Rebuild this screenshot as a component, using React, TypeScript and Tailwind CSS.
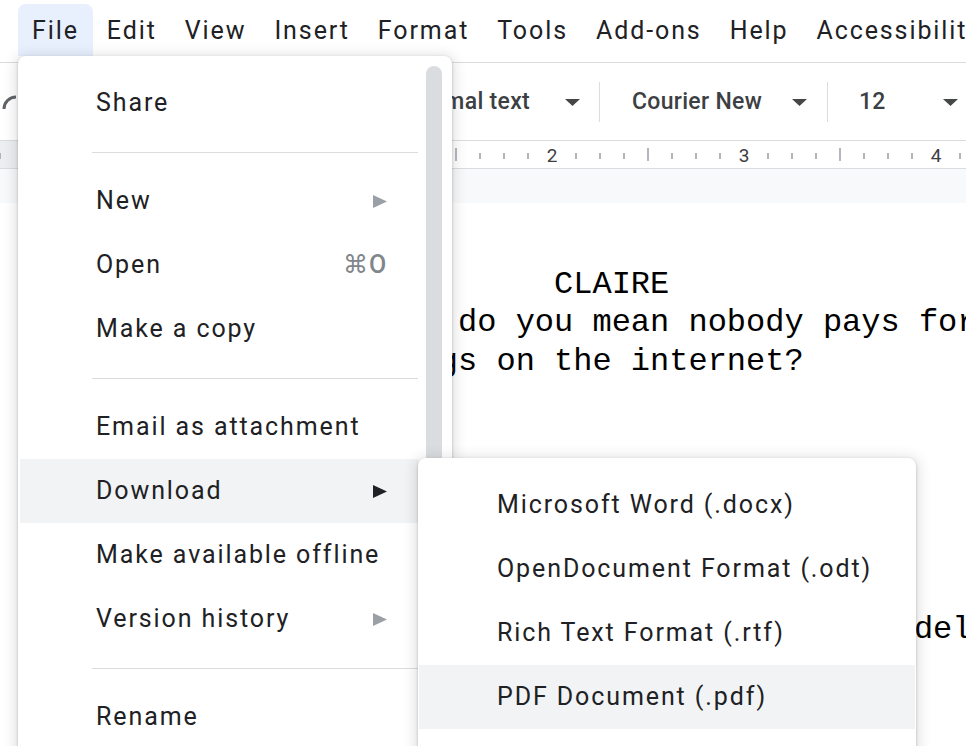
import React from "react";

const Caret = () => (
  <svg width="15" height="7" viewBox="0 0 15 7" className="block">
    <polygon points="0,0 15,0 7.5,7" fill="#444746" />
  </svg>
);

const Tri = ({ color }: { color: string }) => (
  <svg width="14" height="13" viewBox="0 0 14 13" className="block">
    <polygon points="0,0 14,6.5 0,13" fill={color} />
  </svg>
);

function Ruler() {
  const els: React.ReactNode[] = [];
  for (let n = -7; n <= 34; n++) {
    const x = 168 + 24 * n;
    if (x < 0 || x > 966) continue;
    const m = ((n % 8) + 8) % 8;
    if (m === 0) {
      const num = n / 8;
      if (num > 0)
        els.push(
          <text key={n} x={x} y={21} textAnchor="middle" fontSize="19" fill="#3c4043" fontFamily="Roboto, sans-serif">
            {num}
          </text>
        );
    } else if (m === 4) {
      els.push(<rect key={n} x={x - 0.75} y={7} width={1.5} height={13} fill="#9aa0a6" />);
    } else {
      els.push(<rect key={n} x={x - 0.75} y={12} width={1.5} height={6} fill="#9aa0a6" />);
    }
  }
  return (
    <svg width="966" height="27" viewBox="0 0 966 27" className="block">
      <rect x="0" y="0" width="168" height="27" fill="#eceef1" />
      {els}
    </svg>
  );
}

const menuBar = ["File", "Edit", "View", "Insert", "Format", "Tools", "Add-ons", "Help", "Accessibility"];

type Item =
  | { type: "sep" }
  | { type: "item"; label: string; right?: "arrow" | "arrowDark" | "cmd"; active?: boolean };

const fileItems: Item[] = [
  { type: "item", label: "Share" },
  { type: "sep" },
  { type: "item", label: "New", right: "arrow" },
  { type: "item", label: "Open", right: "cmd" },
  { type: "item", label: "Make a copy" },
  { type: "sep" },
  { type: "item", label: "Email as attachment" },
  { type: "item", label: "Download", right: "arrowDark", active: true },
  { type: "item", label: "Make available offline" },
  { type: "item", label: "Version history", right: "arrow" },
  { type: "sep" },
  { type: "item", label: "Rename" },
];

const subItems = [
  { label: "Microsoft Word (.docx)" },
  { label: "OpenDocument Format (.odt)" },
  { label: "Rich Text Format (.rtf)" },
  { label: "PDF Document (.pdf)", active: true },
];

export default function App() {
  return (
    <div className="relative h-[746px] w-[966px] overflow-hidden bg-white font-['Roboto',sans-serif]">
      {/* Menu bar */}
      <div className="flex h-[63px] items-start border-b border-[#dadce0] pl-[18px] pt-[4px] text-[25px] tracking-[1.9px] text-[#202124]">
        {menuBar.map((m) => (
          <div
            key={m}
            className={
              "flex h-[52px] shrink-0 items-center rounded-t-[8px] px-[14px] pt-[2px] " +
              (m === "File" ? "bg-[#e8f0fe]" : "")
            }
          >
            {m}
          </div>
        ))}
      </div>

      {/* Toolbar */}
      <div className="flex h-[78px] items-center border-b border-[#dadce0] pt-[1px] text-[23px] font-medium tracking-[0.3px] text-[#3c4043]">
        <div className="relative h-full w-[20px] shrink-0">
          <svg width="20" height="77" viewBox="0 0 20 77" className="block">
            <path d="M4 45 A12 12 0 0 1 16 33" fill="none" stroke="#5f6368" strokeWidth="3" />
          </svg>
        </div>
        <div className="flex w-[579px] shrink-0 items-center justify-end pr-[19px]">
          <span className="whitespace-nowrap">Normal text</span>
          <span className="ml-[35px]">
            <Caret />
          </span>
        </div>
        <div className="h-[40px] w-px shrink-0 bg-[#dadce0]" />
        <div className="flex w-[227px] shrink-0 items-center justify-between pl-[32px] pr-[20px]">
          <span className="whitespace-nowrap">Courier New</span>
          <Caret />
        </div>
        <div className="h-[40px] w-px shrink-0 bg-[#dadce0]" />
        <div className="flex flex-1 items-center justify-between pl-[31px] pr-[8px]">
          <span>12</span>
          <Caret />
        </div>
      </div>

      {/* Ruler */}
      <div className="h-[28px] border-b border-[#dadce0]">
        <Ruler />
      </div>

      {/* Canvas gap */}
      <div className="h-[34px] bg-[#f8f9fa]" />

      {/* Document */}
      <div className="whitespace-pre pl-[362px] pt-[63px] font-['Liberation_Mono',monospace] text-[32px] leading-[38.3px] text-black">
        <div>{"          CLAIRE"}</div>
        <div>What do you mean nobody pays for</div>
        <div>things on the internet?</div>
        <div>{" "}</div>
        <div>{" "}</div>
        <div>{" "}</div>
        <div>{" "}</div>
        <div>{" "}</div>
        <div>{" "}</div>
        <div className="-ml-[5px]">That's the entire business model.</div>
      </div>

      {/* File menu */}
      <div className="absolute left-[18px] top-[56px] flex h-[720px] w-[434px] rounded-t-[8px] bg-white text-[25px] tracking-[1.9px] text-[#202124] shadow-[0_2px_12px_4px_rgba(60,64,67,0.13),0_1px_3px_0_rgba(60,64,67,0.3)]">
        <div className="w-[400px] shrink-0 pl-[2px] pt-[15px]">
          {fileItems.map((it, i) =>
            it.type === "sep" ? (
              <div key={i} className="flex h-[34px] items-center pl-[72px]">
                <div className="h-px w-full bg-[#dadce0]" />
              </div>
            ) : (
              <div
                key={i}
                className={
                  "flex h-[64px] items-center justify-between pl-[76px] pr-[31px] " + (it.active ? "bg-[#f1f3f4]" : "")
                }
              >
                <span className="whitespace-nowrap">{it.label}</span>
                {it.right === "arrow" && <Tri color="#9aa0a6" />}
                {it.right === "arrowDark" && <Tri color="#202124" />}
                {it.right === "cmd" && <span className="font-medium tracking-[0.8px] text-[#80868b]">⌘O</span>}
              </div>
            )
          )}
        </div>
        <div className="w-[34px] shrink-0 pl-[8px] pt-[10px]">
          <div className="h-[460px] w-[16px] rounded-full bg-[#dadce0]" />
        </div>
      </div>

      {/* Download submenu */}
      <div className="absolute left-[418px] top-[458px] h-[300px] w-[498px] rounded-t-[8px] bg-white px-[1px] pt-[15px] text-[25px] tracking-[1.9px] text-[#202124] shadow-[0_2px_12px_4px_rgba(60,64,67,0.13),0_1px_3px_0_rgba(60,64,67,0.3)]">
        {subItems.map((s) => (
          <div
            key={s.label}
            className={"flex h-[64px] items-center pl-[78px] " + (s.active ? "bg-[#f1f3f4]" : "")}
          >
            <span className="whitespace-nowrap">{s.label}</span>
          </div>
        ))}
      </div>
    </div>
  );
}
